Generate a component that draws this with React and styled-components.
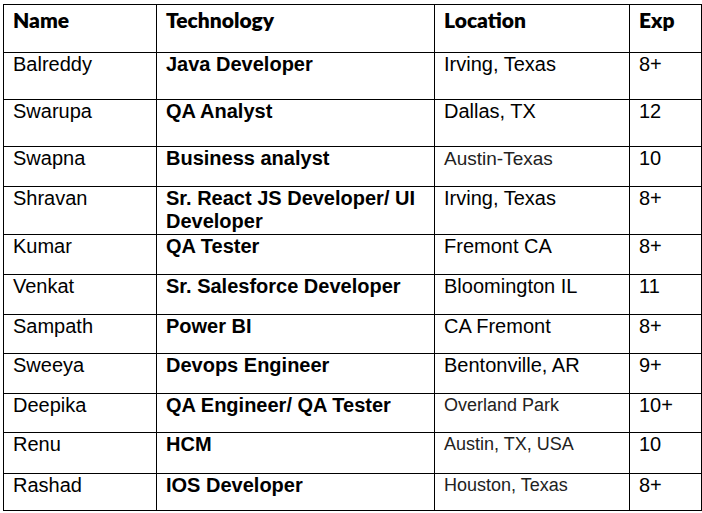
import styled, { createGlobalStyle } from "styled-components";

const GlobalStyle = createGlobalStyle`
  html, body {
    margin: 0;
    padding: 0;
    background: #ffffff;
  }
`;

const rows = [
  { name: "Balreddy", tech: "Java Developer", loc: "Irving, Texas", exp: "8+", h: 47 },
  { name: "Swarupa", tech: "QA Analyst", loc: "Dallas, TX", exp: "12", h: 47 },
  { name: "Swapna", tech: "Business analyst", loc: "Austin-Texas", exp: "10", h: 40, locSize: 19 },
  { name: "Shravan", tech: "Sr. React JS Developer/ UI Developer", loc: "Irving, Texas", exp: "8+", h: 48 },
  { name: "Kumar", tech: "QA Tester", loc: "Fremont CA", exp: "8+", h: 40 },
  { name: "Venkat", tech: "Sr. Salesforce Developer", loc: "Bloomington IL", exp: "11", h: 40 },
  { name: "Sampath", tech: "Power BI", loc: "CA Fremont", exp: "8+", h: 39 },
  { name: "Sweeya", tech: "Devops Engineer", loc: "Bentonville, AR", exp: "9+", h: 40 },
  { name: "Deepika", tech: "QA Engineer/ QA Tester", loc: "Overland Park", exp: "10+", h: 39, locSize: 18 },
  { name: "Renu", tech: "HCM", loc: "Austin, TX, USA", exp: "10", h: 41, locSize: 18 },
  { name: "Rashad", tech: "IOS Developer", loc: "Houston, Texas", exp: "8+", h: 37, locSize: 18 },
];

const App = () => {
  return (
    <>
      <GlobalStyle />
      <Page>
        <Table>
          <colgroup>
            <col style={{ width: 153 }} />
            <col style={{ width: 278 }} />
            <col style={{ width: 195 }} />
            <col style={{ width: 72 }} />
          </colgroup>
          <thead>
            <Row h={48}>
              <Head>Name</Head>
              <Head>Technology</Head>
              <Head>Location</Head>
              <Head>Exp</Head>
            </Row>
          </thead>
          <tbody>
            {rows.map((r, i) => (
              <Row key={i} h={r.h}>
                <Cell>{r.name}</Cell>
                <Cell bold>{r.tech}</Cell>
                <Cell size={r.locSize}>{r.loc}</Cell>
                <Cell>{r.exp}</Cell>
              </Row>
            ))}
          </tbody>
        </Table>
      </Page>
    </>
  );
};

export default App;

const Page = styled.div`
  padding: 4px 0 0 3px;
  width: 702px;
  height: 513px;
  box-sizing: border-box;
  background: #ffffff;
`;

const Table = styled.table`
  border-collapse: collapse;
  table-layout: fixed;
  width: 698px;
  border: 1px solid #000;
`;

const Row = styled.tr`
  height: ${(props) => props.h}px;
`;

const Head = styled.th`
  border: 1px solid #000;
  padding: 2px 8px 0 9px;
  vertical-align: top;
  text-align: left;
  font-family: Lato, "Open Sans", sans-serif;
  font-weight: 800;
  font-size: 21px;
  line-height: 26px;
  color: #000;
`;

const Cell = styled.td`
  border: 1px solid #000;
  padding: 0 8px 0 9px;
  vertical-align: top;
  text-align: left;
  font-family: "Liberation Sans", Arial, sans-serif;
  font-weight: ${(props) => (props.bold ? 700 : 400)};
  font-size: ${(props) => props.size || 20}px;
  line-height: 23px;
  color: ${(props) => (props.size ? "#222" : "#000")};
  box-sizing: border-box;
`;
